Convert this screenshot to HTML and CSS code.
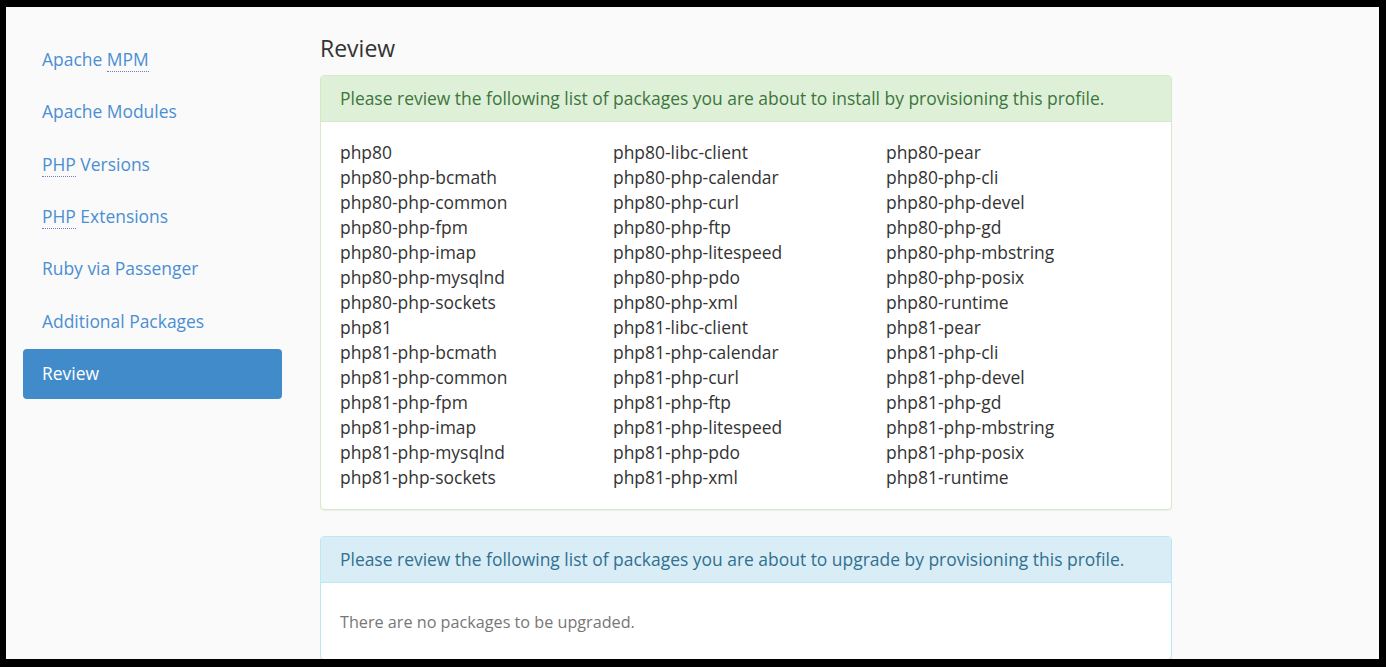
FILE: index.html
```html
<!DOCTYPE html>
<html lang="en">
<head>
<meta charset="utf-8">
<title>Review</title>
<link rel="stylesheet" href="styles.css">
</head>
<body>
<div class="frame">
  <nav class="sidebar">
    <a class="nav-item" href="#">Apache <abbr title="Multi-Processing Module">MPM</abbr></a>
    <a class="nav-item" href="#">Apache Modules</a>
    <a class="nav-item" href="#"><abbr title="PHP: Hypertext Preprocessor">PHP</abbr> Versions</a>
    <a class="nav-item" href="#"><abbr title="PHP: Hypertext Preprocessor">PHP</abbr> Extensions</a>
    <a class="nav-item" href="#">Ruby via Passenger</a>
    <a class="nav-item" href="#">Additional Packages</a>
    <a class="nav-item active" href="#">Review</a>
  </nav>
  <main class="main">
    <h2 class="title">Review</h2>
    <section class="panel panel-success">
      <div class="panel-heading">Please review the following list of packages you are about to install by provisioning this profile.</div>
      <div class="panel-body">
        <ul class="pkg-list">
          <li>php80</li><li>php80-libc-client</li><li>php80-pear</li>
          <li>php80-php-bcmath</li><li>php80-php-calendar</li><li>php80-php-cli</li>
          <li>php80-php-common</li><li>php80-php-curl</li><li>php80-php-devel</li>
          <li>php80-php-fpm</li><li>php80-php-ftp</li><li>php80-php-gd</li>
          <li>php80-php-imap</li><li>php80-php-litespeed</li><li>php80-php-mbstring</li>
          <li>php80-php-mysqlnd</li><li>php80-php-pdo</li><li>php80-php-posix</li>
          <li>php80-php-sockets</li><li>php80-php-xml</li><li>php80-runtime</li>
          <li>php81</li><li>php81-libc-client</li><li>php81-pear</li>
          <li>php81-php-bcmath</li><li>php81-php-calendar</li><li>php81-php-cli</li>
          <li>php81-php-common</li><li>php81-php-curl</li><li>php81-php-devel</li>
          <li>php81-php-fpm</li><li>php81-php-ftp</li><li>php81-php-gd</li>
          <li>php81-php-imap</li><li>php81-php-litespeed</li><li>php81-php-mbstring</li>
          <li>php81-php-mysqlnd</li><li>php81-php-pdo</li><li>php81-php-posix</li>
          <li>php81-php-sockets</li><li>php81-php-xml</li><li>php81-runtime</li>
        </ul>
      </div>
    </section>
    <section class="panel panel-info">
      <div class="panel-heading">Please review the following list of packages you are about to upgrade by provisioning this profile.</div>
      <div class="panel-body panel-body-empty">
        <p class="empty">There are no packages to be upgraded.</p>
      </div>
    </section>
  </main>
</div>
</body>
</html>
```
FILE: styles.css
```css
html, body {
  margin: 0;
  padding: 0;
  background: #000;
}
body {
  font-family: "Open Sans", "Liberation Sans", sans-serif;
  font-size: 17.45px;
  line-height: 25px;
  color: #333;
}
.frame {
  margin: 7px 7px 8px 6px;
  height: 652px;
  overflow: hidden;
  background: #fafafa;
  display: flex;
  align-items: flex-start;
  padding-left: 17px;
  box-sizing: border-box;
}
.sidebar {
  width: 259px;
  flex: none;
  display: flex;
  flex-direction: column;
  gap: 2.4px;
  padding-top: 27.4px;
}
.nav-item {
  display: block;
  padding: 12.5px 19px;
  line-height: 25px;
  color: #4a8fd3;
  text-decoration: none;
  border-radius: 4px;
}
.nav-item.active {
  background: #428bca;
  color: #fff;
}
abbr {
  text-decoration: none;
  border-bottom: 1px dotted #6f7fb8;
  cursor: help;
}
.main {
  width: 852px;
  flex: none;
  margin-left: 38px;
  padding-top: 26px;
}
.title {
  margin: 0 0 12px;
  font-size: 23px;
  line-height: 30px;
  font-weight: 400;
  color: #333;
}
.panel {
  background: #fff;
  border: 1px solid #ddd;
  border-radius: 4px;
  margin-bottom: 26px;
  box-shadow: 0 1px 1px rgba(0,0,0,0.05);
}
.panel-heading {
  padding: 9.5px 19px 10.5px;
  border-bottom: 1px solid transparent;
  border-radius: 3px 3px 0 0;
}
.panel-success { border-color: #d6e9c6; }
.panel-success .panel-heading {
  background: #dff0d8;
  color: #3c763d;
  border-bottom-color: #d6e9c6;
}
.panel-info { border-color: #bce8f1; }
.panel-info .panel-heading {
  background: #d9edf7;
  color: #31708f;
  border-bottom-color: #bce8f1;
}
.panel-body {
  padding: 18px 19px 19px;
}
.pkg-list {
  list-style: none;
  margin: 0;
  padding: 0;
  display: grid;
  grid-template-columns: 273px 273px 273px;
}
.panel-body-empty {
  padding: 28px 19px 26px;
}
.empty {
  margin: 0;
  font-size: 16.2px;
  line-height: 22px;
  color: #777;
}
```
